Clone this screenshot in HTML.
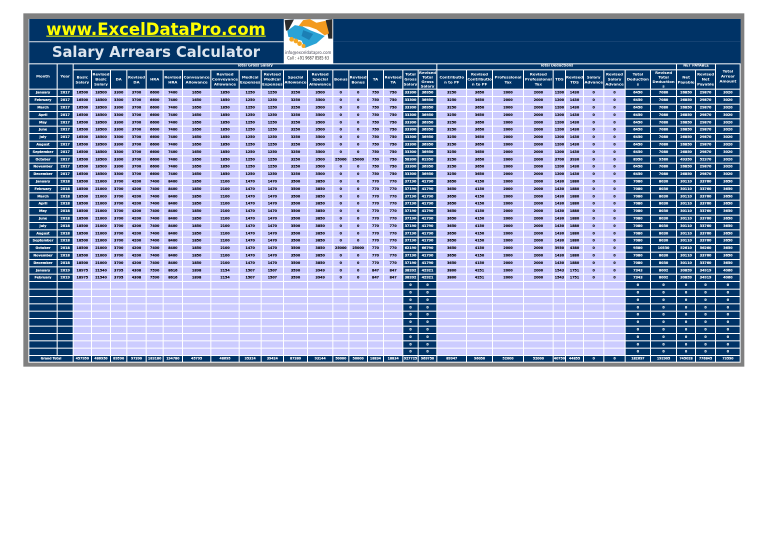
<!DOCTYPE html>
<html><head><meta charset="utf-8"><title>Salary Arrears Calculator</title>
<style>
html,body{margin:0;padding:0;background:#fff;width:768px;height:543px;overflow:hidden}
#w{position:absolute;left:20px;top:10px;width:2300px;height:1100px;transform-origin:0 0;transform:scale(.33333);filter:blur(.9px);font-family:"DejaVu Sans","Liberation Sans",sans-serif;font-weight:bold}
#g{position:absolute;left:10px;top:10px;width:2163px;height:1060px;background:#808080}
#n{position:absolute;left:27px;top:27px;width:2135px;height:1030px;background:#003366}
.l{position:absolute;background:#a9b8ca}
#t1{position:absolute;left:28px;top:27px;width:760px;height:66px;line-height:62px;text-align:center;color:#ffff00;font-size:49.5px;text-decoration:underline;text-decoration-thickness:3px}
#t2{position:absolute;left:28px;top:97px;width:760px;height:63px;line-height:60px;text-align:center;color:#dde5ee;font-size:44px}
#lg{position:absolute;left:791px;top:27px;width:149px;height:134px}
table{position:absolute;left:25px;top:160px;width:2137px;table-layout:fixed;border-collapse:separate;border-spacing:3px;background:#fff}
td{padding:0;height:19px;font-size:10px;line-height:12px;text-align:center;vertical-align:middle;background:#ccccff;color:#000;overflow:hidden;white-space:nowrap;-webkit-text-stroke:.35px currentColor}
tr.d td:nth-child(1),tr.d td:nth-child(2),tr.d td:nth-child(19),tr.d td:nth-child(20),tr.d td:nth-child(n+29){background:#003366;color:#fff}
tr.d:nth-child(5n+4) td{height:20px}
tr.h td{background:#003366;color:#fff;font-size:11.5px;line-height:15px;white-space:normal;-webkit-text-stroke:0}
tr.h td.q{line-height:13.5px}
tr.b td{height:15px;font-size:10.5px;line-height:9px;vertical-align:top}
tr.b td.m{height:73px;font-size:11.5px;line-height:15px;vertical-align:middle}
tr.s td{height:55px}
tr.f td{background:#003366;color:#fff;height:17px;font-size:9.5px}
</style></head><body>
<div id="w">
<div id="g"></div><div id="n"></div>
<div class="l" style="left:25px;top:93px;width:766px;height:4px"></div>
<div class="l" style="left:25px;top:27px;width:3px;height:135px"></div>
<div class="l" style="left:940px;top:93px;width:1222px;height:2px;background:#1f4a7a"></div>
<div id="t1">www.ExcelDataPro.com</div>
<div id="t2">Salary Arrears Calculator</div>
<svg id="lg" viewBox="41 27 150 134">
<rect x="41" y="27" width="150" height="134" fill="#fff"/>
<path d="M44 30 72 28 55 60 48 62Z" fill="#2b2b2b"/>
<path d="M168 30 188 27 188 86 176 86Z" fill="#2b2b2b"/>
<path d="M80 56 100 30 120 27 140 38 168 32 178 70 165 76 140 58 118 50 100 48 85 62Z" fill="#f39a1f"/>
<path d="M52 62 75 45 100 50 120 60 150 72 165 78 140 100 105 114 95 92 70 85 55 80Z" fill="#2aa3d6"/>
<path d="M100 60 130 72 118 90 95 78Z" fill="#1c7fb5"/>
<circle cx="65" cy="88" r="7" fill="#f5a623"/><circle cx="78" cy="93" r="7" fill="#f5a623"/><circle cx="89" cy="101" r="7" fill="#f5a623"/><circle cx="101" cy="108" r="6" fill="#f5a623"/>
<text x="45" y="132" font-size="12" font-weight="normal" fill="#445" textLength="140" lengthAdjust="spacingAndGlyphs">info@exceldatapro.com</text>
<text x="52" y="149" font-size="12" font-weight="normal" fill="#222" textLength="126" lengthAdjust="spacingAndGlyphs">Call : +91 9687 8585 63</text>
</svg>
<table>
<colgroup><col style="width:82px"><col style="width:45px"><col style="width:52px"><col style="width:54px"><col style="width:46px"><col style="width:55px"><col style="width:48px"><col style="width:55px"><col style="width:82px"><col style="width:82px"><col style="width:63px"><col style="width:64px"><col style="width:69px"><col style="width:73px"><col style="width:45px"><col style="width:53px"><col style="width:45px"><col style="width:55px"><col style="width:43px"><col style="width:53px"><col style="width:86px"><col style="width:75px"><col style="width:90px"><col style="width:86px"><col style="width:34px"><col style="width:51px"><col style="width:58px"><col style="width:61px"><col style="width:73px"><col style="width:75px"><col style="width:54px"><col style="width:57px"><col style="width:71px"></colgroup>
<tr class="h b"><td class="m" rowspan="2">Month</td><td class="m" rowspan="2">Year</td><td colspan="18">Total Gross Salary</td><td colspan="10">Total Deductions</td><td colspan="2">NET PAYABLE</td><td class="m" rowspan="2">Total<br>Arrear<br>Amount</td></tr>
<tr class="h s"><td>Basic<br>Salary</td><td>Revised<br>Basic<br>Salary</td><td>DA</td><td>Revised<br>DA</td><td>HRA</td><td>Revised<br>HRA</td><td>Conveyance<br>Allowance</td><td>Revised<br>Conveyance<br>Allowance</td><td>Medical<br>Expenses</td><td>Revised<br>Medical<br>Expenses</td><td>Special<br>Allowance</td><td>Revised<br>Special<br>Allowance</td><td>Bonus</td><td>Revised<br>Bonus</td><td>TA</td><td>Revised<br>TA</td><td>Total<br>Gross<br>Salary</td><td class="q">Revised<br>Total<br>Gross<br>Salary</td><td>Contributio<br>n to PF</td><td>Revised<br>Contributio<br>n to PF</td><td>Professional<br>Tax</td><td>Revised<br>Professional<br>Tax</td><td>TDS</td><td>Revised<br>TDS</td><td>Salary<br>Advance</td><td>Revised<br>Salary<br>Advance</td><td>Total<br>Deduction<br>s</td><td class="q">Revised<br>Total<br>Deduction<br>s</td><td>Net<br>Payable</td><td>Revised<br>Net<br>Payable</td></tr>
<tr class="d"><td>January<td>2017<td>16500<td>18500<td>3300<td>3700<td>6600<td>7400<td>1650<td>1850<td>1250<td>1250<td>3250<td>3500<td>0<td>0<td>750<td>750<td>33300<td>36950<td>3250<td>3650<td>2000<td>2000<td>1200<td>1430<td>0<td>0<td>6450<td>7080<td>26850<td>29870<td>3020</tr>
<tr class="d"><td>February<td>2017<td>16500<td>18500<td>3300<td>3700<td>6600<td>7400<td>1650<td>1850<td>1250<td>1250<td>3250<td>3500<td>0<td>0<td>750<td>750<td>33300<td>36950<td>3250<td>3650<td>2000<td>2000<td>1200<td>1430<td>0<td>0<td>6450<td>7080<td>26850<td>29870<td>3020</tr>
<tr class="d"><td>March<td>2017<td>16500<td>18500<td>3300<td>3700<td>6600<td>7400<td>1650<td>1850<td>1250<td>1250<td>3250<td>3500<td>0<td>0<td>750<td>750<td>33300<td>36950<td>3250<td>3650<td>2000<td>2000<td>1200<td>1430<td>0<td>0<td>6450<td>7080<td>26850<td>29870<td>3020</tr>
<tr class="d"><td>April<td>2017<td>16500<td>18500<td>3300<td>3700<td>6600<td>7400<td>1650<td>1850<td>1250<td>1250<td>3250<td>3500<td>0<td>0<td>750<td>750<td>33300<td>36950<td>3250<td>3650<td>2000<td>2000<td>1200<td>1430<td>0<td>0<td>6450<td>7080<td>26850<td>29870<td>3020</tr>
<tr class="d"><td>May<td>2017<td>16500<td>18500<td>3300<td>3700<td>6600<td>7400<td>1650<td>1850<td>1250<td>1250<td>3250<td>3500<td>0<td>0<td>750<td>750<td>33300<td>36950<td>3250<td>3650<td>2000<td>2000<td>1200<td>1430<td>0<td>0<td>6450<td>7080<td>26850<td>29870<td>3020</tr>
<tr class="d"><td>June<td>2017<td>16500<td>18500<td>3300<td>3700<td>6600<td>7400<td>1650<td>1850<td>1250<td>1250<td>3250<td>3500<td>0<td>0<td>750<td>750<td>33300<td>36950<td>3250<td>3650<td>2000<td>2000<td>1200<td>1430<td>0<td>0<td>6450<td>7080<td>26850<td>29870<td>3020</tr>
<tr class="d"><td>July<td>2017<td>16500<td>18500<td>3300<td>3700<td>6600<td>7400<td>1650<td>1850<td>1250<td>1250<td>3250<td>3500<td>0<td>0<td>750<td>750<td>33300<td>36950<td>3250<td>3650<td>2000<td>2000<td>1200<td>1430<td>0<td>0<td>6450<td>7080<td>26850<td>29870<td>3020</tr>
<tr class="d"><td>August<td>2017<td>16500<td>18500<td>3300<td>3700<td>6600<td>7400<td>1650<td>1850<td>1250<td>1250<td>3250<td>3500<td>0<td>0<td>750<td>750<td>33300<td>36950<td>3250<td>3650<td>2000<td>2000<td>1200<td>1430<td>0<td>0<td>6450<td>7080<td>26850<td>29870<td>3020</tr>
<tr class="d"><td>September<td>2017<td>16500<td>18500<td>3300<td>3700<td>6600<td>7400<td>1650<td>1850<td>1250<td>1250<td>3250<td>3500<td>0<td>0<td>750<td>750<td>33300<td>36950<td>3250<td>3650<td>2000<td>2000<td>1200<td>1430<td>0<td>0<td>6450<td>7080<td>26850<td>29870<td>3020</tr>
<tr class="d"><td>October<td>2017<td>16500<td>18500<td>3300<td>3700<td>6600<td>7400<td>1650<td>1850<td>1250<td>1250<td>3250<td>3500<td>25000<td>25000<td>750<td>750<td>58300<td>61950<td>3250<td>3650<td>2000<td>2000<td>3700<td>3930<td>0<td>0<td>8950<td>9580<td>49350<td>52370<td>3020</tr>
<tr class="d"><td>November<td>2017<td>16500<td>18500<td>3300<td>3700<td>6600<td>7400<td>1650<td>1850<td>1250<td>1250<td>3250<td>3500<td>0<td>0<td>750<td>750<td>33300<td>36950<td>3250<td>3650<td>2000<td>2000<td>1200<td>1430<td>0<td>0<td>6450<td>7080<td>26850<td>29870<td>3020</tr>
<tr class="d"><td>December<td>2017<td>16500<td>18500<td>3300<td>3700<td>6600<td>7400<td>1650<td>1850<td>1250<td>1250<td>3250<td>3500<td>0<td>0<td>750<td>750<td>33300<td>36950<td>3250<td>3650<td>2000<td>2000<td>1200<td>1430<td>0<td>0<td>6450<td>7080<td>26850<td>29870<td>3020</tr>
<tr class="d"><td>January<td>2018<td>18500<td>21000<td>3700<td>4200<td>7400<td>8400<td>1850<td>2100<td>1470<td>1470<td>3500<td>3850<td>0<td>0<td>770<td>770<td>37190<td>41790<td>3650<td>4150<td>2000<td>2000<td>1430<td>1880<td>0<td>0<td>7080<td>8030<td>30110<td>33760<td>3650</tr>
<tr class="d"><td>February<td>2018<td>18500<td>21000<td>3700<td>4200<td>7400<td>8400<td>1850<td>2100<td>1470<td>1470<td>3500<td>3850<td>0<td>0<td>770<td>770<td>37190<td>41790<td>3650<td>4150<td>2000<td>2000<td>1430<td>1880<td>0<td>0<td>7080<td>8030<td>30110<td>33760<td>3650</tr>
<tr class="d"><td>March<td>2018<td>18500<td>21000<td>3700<td>4200<td>7400<td>8400<td>1850<td>2100<td>1470<td>1470<td>3500<td>3850<td>0<td>0<td>770<td>770<td>37190<td>41790<td>3650<td>4150<td>2000<td>2000<td>1430<td>1880<td>0<td>0<td>7080<td>8030<td>30110<td>33760<td>3650</tr>
<tr class="d"><td>April<td>2018<td>18500<td>21000<td>3700<td>4200<td>7400<td>8400<td>1850<td>2100<td>1470<td>1470<td>3500<td>3850<td>0<td>0<td>770<td>770<td>37190<td>41790<td>3650<td>4150<td>2000<td>2000<td>1430<td>1880<td>0<td>0<td>7080<td>8030<td>30110<td>33760<td>3650</tr>
<tr class="d"><td>May<td>2018<td>18500<td>21000<td>3700<td>4200<td>7400<td>8400<td>1850<td>2100<td>1470<td>1470<td>3500<td>3850<td>0<td>0<td>770<td>770<td>37190<td>41790<td>3650<td>4150<td>2000<td>2000<td>1430<td>1880<td>0<td>0<td>7080<td>8030<td>30110<td>33760<td>3650</tr>
<tr class="d"><td>June<td>2018<td>18500<td>21000<td>3700<td>4200<td>7400<td>8400<td>1850<td>2100<td>1470<td>1470<td>3500<td>3850<td>0<td>0<td>770<td>770<td>37190<td>41790<td>3650<td>4150<td>2000<td>2000<td>1430<td>1880<td>0<td>0<td>7080<td>8030<td>30110<td>33760<td>3650</tr>
<tr class="d"><td>July<td>2018<td>18500<td>21000<td>3700<td>4200<td>7400<td>8400<td>1850<td>2100<td>1470<td>1470<td>3500<td>3850<td>0<td>0<td>770<td>770<td>37190<td>41790<td>3650<td>4150<td>2000<td>2000<td>1430<td>1880<td>0<td>0<td>7080<td>8030<td>30110<td>33760<td>3650</tr>
<tr class="d"><td>August<td>2018<td>18500<td>21000<td>3700<td>4200<td>7400<td>8400<td>1850<td>2100<td>1470<td>1470<td>3500<td>3850<td>0<td>0<td>770<td>770<td>37190<td>41790<td>3650<td>4150<td>2000<td>2000<td>1430<td>1880<td>0<td>0<td>7080<td>8030<td>30110<td>33760<td>3650</tr>
<tr class="d"><td>September<td>2018<td>18500<td>21000<td>3700<td>4200<td>7400<td>8400<td>1850<td>2100<td>1470<td>1470<td>3500<td>3850<td>0<td>0<td>770<td>770<td>37190<td>41790<td>3650<td>4150<td>2000<td>2000<td>1430<td>1880<td>0<td>0<td>7080<td>8030<td>30110<td>33760<td>3650</tr>
<tr class="d"><td>October<td>2018<td>18500<td>21000<td>3700<td>4200<td>7400<td>8400<td>1850<td>2100<td>1470<td>1470<td>3500<td>3850<td>25000<td>25000<td>770<td>770<td>62190<td>66790<td>3650<td>4150<td>2000<td>2000<td>3930<td>4380<td>0<td>0<td>9580<td>10530<td>52610<td>56260<td>3650</tr>
<tr class="d"><td>November<td>2018<td>18500<td>21000<td>3700<td>4200<td>7400<td>8400<td>1850<td>2100<td>1470<td>1470<td>3500<td>3850<td>0<td>0<td>770<td>770<td>37190<td>41790<td>3650<td>4150<td>2000<td>2000<td>1430<td>1880<td>0<td>0<td>7080<td>8030<td>30110<td>33760<td>3650</tr>
<tr class="d"><td>December<td>2018<td>18500<td>21000<td>3700<td>4200<td>7400<td>8400<td>1850<td>2100<td>1470<td>1470<td>3500<td>3850<td>0<td>0<td>770<td>770<td>37190<td>41790<td>3650<td>4150<td>2000<td>2000<td>1430<td>1880<td>0<td>0<td>7080<td>8030<td>30110<td>33760<td>3650</tr>
<tr class="d"><td>January<td>2019<td>18975<td>21540<td>3795<td>4308<td>7590<td>8616<td>1898<td>2154<td>1507<td>1507<td>3590<td>3949<td>0<td>0<td>847<td>847<td>38202<td>42921<td>3800<td>4251<td>2000<td>2000<td>1543<td>1751<td>0<td>0<td>7343<td>8002<td>30859<td>34919<td>4060</tr>
<tr class="d"><td>February<td>2019<td>18975<td>21540<td>3795<td>4308<td>7590<td>8616<td>1898<td>2154<td>1507<td>1507<td>3590<td>3949<td>0<td>0<td>847<td>847<td>38202<td>42921<td>3800<td>4251<td>2000<td>2000<td>1543<td>1751<td>0<td>0<td>7343<td>8002<td>30859<td>34919<td>4060</tr>
<tr class="d"><td><td><td><td><td><td><td><td><td><td><td><td><td><td><td><td><td><td><td>0<td>0<td><td><td><td><td><td><td><td><td>0<td>0<td>0<td>0<td>0</tr>
<tr class="d"><td><td><td><td><td><td><td><td><td><td><td><td><td><td><td><td><td><td><td>0<td>0<td><td><td><td><td><td><td><td><td>0<td>0<td>0<td>0<td>0</tr>
<tr class="d"><td><td><td><td><td><td><td><td><td><td><td><td><td><td><td><td><td><td><td>0<td>0<td><td><td><td><td><td><td><td><td>0<td>0<td>0<td>0<td>0</tr>
<tr class="d"><td><td><td><td><td><td><td><td><td><td><td><td><td><td><td><td><td><td><td>0<td>0<td><td><td><td><td><td><td><td><td>0<td>0<td>0<td>0<td>0</tr>
<tr class="d"><td><td><td><td><td><td><td><td><td><td><td><td><td><td><td><td><td><td><td>0<td>0<td><td><td><td><td><td><td><td><td>0<td>0<td>0<td>0<td>0</tr>
<tr class="d"><td><td><td><td><td><td><td><td><td><td><td><td><td><td><td><td><td><td><td>0<td>0<td><td><td><td><td><td><td><td><td>0<td>0<td>0<td>0<td>0</tr>
<tr class="d"><td><td><td><td><td><td><td><td><td><td><td><td><td><td><td><td><td><td><td>0<td>0<td><td><td><td><td><td><td><td><td>0<td>0<td>0<td>0<td>0</tr>
<tr class="d"><td><td><td><td><td><td><td><td><td><td><td><td><td><td><td><td><td><td><td>0<td>0<td><td><td><td><td><td><td><td><td>0<td>0<td>0<td>0<td>0</tr>
<tr class="d"><td><td><td><td><td><td><td><td><td><td><td><td><td><td><td><td><td><td><td>0<td>0<td><td><td><td><td><td><td><td><td>0<td>0<td>0<td>0<td>0</tr>
<tr class="d"><td><td><td><td><td><td><td><td><td><td><td><td><td><td><td><td><td><td><td>0<td>0<td><td><td><td><td><td><td><td><td>0<td>0<td>0<td>0<td>0</tr>
<tr class="f"><td colspan="2">Grand Total</td><td>457950<td>486950<td>89590<td>97390<td>183180<td>194780<td>45795<td>48695<td>35324<td>39424<td>87380<td>93144<td>50000<td>50000<td>18834<td>18834<td>927725<td>969750<td>89947<td>96050<td>52000<td>52000<td>40750<td>44855<td>0<td>0<td>182697<td>192905<td>745028<td>776845<td>73590</td></tr>
</table>
</div>
</body></html>
